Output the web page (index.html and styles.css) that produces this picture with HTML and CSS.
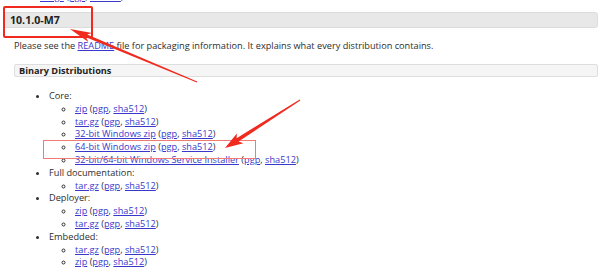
FILE: index.html
```html
<!DOCTYPE html>
<html lang="en">
<head>
    <meta charset="UTF-8">
    <title>Apache Tomcat 10 - Downloads</title>
    <link rel="stylesheet" href="styles.css">
</head>
<body>
    <div class="page">
        <div class="prev"><div class="prev-line"><a href="#">tar.gz</a> (<a href="#">pgp</a>, <a href="#">sha512</a>)</div></div>

        <h3 class="version">10.1.0-M7</h3>
        <p class="intro">Please see the <a href="#">README</a> file for packaging information. It explains what every distribution contains.</p>

        <h4 class="section">Binary Distributions</h4>
        <ul class="dist">
            <li>Core:
                <ul>
                    <li><a href="#">zip</a> (<a href="#">pgp</a>, <a href="#">sha512</a>)</li>
                    <li><a href="#">tar.gz</a> (<a href="#">pgp</a>, <a href="#">sha512</a>)</li>
                    <li><a href="#">32-bit Windows zip</a> (<a href="#">pgp</a>, <a href="#">sha512</a>)</li>
                    <li><a href="#">64-bit Windows zip</a> (<a href="#">pgp</a>, <a href="#">sha512</a>)</li>
                    <li><a href="#">32-bit/64-bit Windows Service Installer</a> (<a href="#">pgp</a>, <a href="#">sha512</a>)</li>
                </ul>
            </li>
            <li>Full documentation:
                <ul>
                    <li><a href="#">tar.gz</a> (<a href="#">pgp</a>, <a href="#">sha512</a>)</li>
                </ul>
            </li>
            <li>Deployer:
                <ul>
                    <li><a href="#">zip</a> (<a href="#">pgp</a>, <a href="#">sha512</a>)</li>
                    <li><a href="#">tar.gz</a> (<a href="#">pgp</a>, <a href="#">sha512</a>)</li>
                </ul>
            </li>
            <li>Embedded:
                <ul>
                    <li><a href="#">tar.gz</a> (<a href="#">pgp</a>, <a href="#">sha512</a>)</li>
                    <li><a href="#">zip</a> (<a href="#">pgp</a>, <a href="#">sha512</a>)</li>
                </ul>
            </li>
        </ul>

        <!-- annotations drawn over the screenshot -->
        <div class="mark mark-version"></div>
        <div class="mark mark-row"></div>
        <svg class="arrows" width="600" height="275" viewBox="0 0 600 275">
            <polygon points="70,29 92.2,32.9 87.2,34.5 197.2,81.5 196.8,82.5 86,37.3 88.4,42.1" fill="#f02a1f"/>
            <polygon points="225,148 243.4,143.3 238.6,141.6 300.3,100.4 299.7,99.6 236.6,138.2 236.9,133.4" fill="#f02a1f"/>
        </svg>
    </div>
</body>
</html>
```

FILE: styles.css
```css
body {
    margin: 0;
    font-family: "Open Sans", "Liberation Sans", sans-serif;
    font-size: 9.2px;
    line-height: 12.8px;
    color: #2e2e2e;
    background: #fff;
}
a {
    color: #3a38cc;
    text-decoration: underline;
}
.page {
    position: relative;
    width: 600px;
    height: 275px;
    overflow: hidden;
}
.prev {
    height: 4px;
    overflow: hidden;
    padding-left: 40px;
}
.prev-line {
    margin-top: -9px;
}
.version {
    box-sizing: border-box;
    height: 16px;
    margin: 8px 2px 0 3px;
    padding: 0 6px;
    font-size: 10.6px;
    line-height: 14px;
    font-weight: 700;
    color: #222;
    background: #e8e8e8;
    border: 1px solid #dcdcdc;
    border-radius: 3px;
}
.intro {
    margin: 12px 0 0 14px;
    line-height: 12px;
}
.section {
    box-sizing: border-box;
    height: 13px;
    margin: 12px 2px 0 14px;
    padding: 0 4px;
    font-size: 9.2px;
    line-height: 11px;
    font-weight: 700;
    color: #222;
    background: #f5f5f5;
    border: 1px solid #dedede;
    border-radius: 2px;
}
.dist {
    margin: 13px 0 0;
    padding-left: 49px;
}
.dist ul {
    margin: 0;
    padding-left: 26px;
    list-style: circle;
}
.mark {
    position: absolute;
    box-sizing: border-box;
}
.mark-version {
    left: 3px;
    top: 6px;
    width: 90px;
    height: 32px;
    border: 2px solid #f02a1f;
    border-radius: 2px;
}
.mark-row {
    left: 43px;
    top: 140px;
    width: 213px;
    height: 19px;
    border: 1px solid #f07a74;
}
.arrows {
    position: absolute;
    left: 0;
    top: 0;
}
```
